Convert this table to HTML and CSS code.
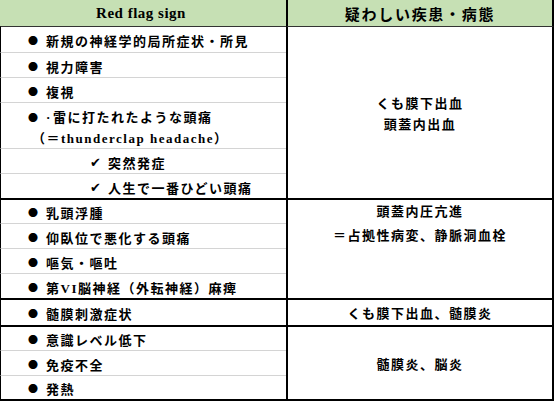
FILE: index.html
```html
<!DOCTYPE html>
<html lang="ja">
<head>
<meta charset="utf-8">
<title>Red flag sign</title>
<link rel="stylesheet" href="styles.css">
</head>
<body>
<div class="sheet">
  <div class="cell head hl">Red flag sign</div>
  <div class="cell head hr">疑わしい疾患・病態</div>

  <div class="cell l first"><span class="b">●</span>新規の神経学的局所症状・所見</div>
  <div class="cell r first span6"><div>くも膜下出血</div><div>頭蓋内出血</div></div>
  <div class="cell l"><span class="b">●</span>視力障害</div>
  <div class="cell l"><span class="b">●</span>複視</div>
  <div class="cell l two">
    <div><span class="b">●</span><span class="dot">·</span>雷に打たれたような頭痛</div>
    <div class="paren">（＝thunderclap headache）</div>
  </div>
  <div class="cell l chk"><span class="c">✔</span>突然発症</div>
  <div class="cell l chk"><span class="c">✔</span>人生で一番ひどい頭痛</div>

  <div class="cell l grp"><span class="b">●</span>乳頭浮腫</div>
  <div class="cell r grp span4 top"><div>頭蓋内圧亢進</div><div>＝占拠性病変、静脈洞血栓</div></div>
  <div class="cell l"><span class="b">●</span>仰臥位で悪化する頭痛</div>
  <div class="cell l"><span class="b">●</span>嘔気・嘔吐</div>
  <div class="cell l"><span class="b">●</span>第VI脳神経（外転神経）麻痺</div>

  <div class="cell l grp"><span class="b">●</span>髄膜刺激症状</div>
  <div class="cell r grp"><div>くも膜下出血、髄膜炎</div></div>

  <div class="cell l grp"><span class="b">●</span>意識レベル低下</div>
  <div class="cell r grp span3 last"><div>髄膜炎、脳炎</div></div>
  <div class="cell l"><span class="b">●</span>免疫不全</div>
  <div class="cell l last"><span class="b">●</span>発熱</div>
</div>
</body>
</html>
```
FILE: styles.css
```css
html, body {
  margin: 0;
  padding: 0;
  background: #ffffff;
}

.sheet {
  display: grid;
  grid-template-columns: 286px 268px;
  grid-template-rows: 26px 26px 25px 25px 46px 25px 25px 25px 25px 25px 25px 27px 25px 25px 26px;
  font-family: "Liberation Serif", "Noto Sans CJK JP", serif;
  font-weight: bold;
  font-size: 13px;
  letter-spacing: 1.5px;
  color: #000;
}

.cell {
  box-sizing: border-box;
  display: flex;
  flex-direction: column;
  justify-content: center;
  white-space: nowrap;
}

.head {
  background: #c6e0b4;
  align-items: center;
}

.hl {
  font-size: 15px;
  letter-spacing: 0.5px;
  padding-right: 4px;
}

.hr {
  font-size: 15px;
  letter-spacing: 1.7px;
  border-left: 2px solid #000;
  border-right: 2px solid #000;
}

.l {
  flex-direction: row;
  align-items: center;
  justify-content: flex-start;
  padding-left: 27px;
  padding-top: 2px;
  border-left: 1px solid #000;
  border-top: 1px solid #d4d4d4;
}

.l.two {
  flex-direction: column;
  align-items: flex-start;
  justify-content: center;
  line-height: 21px;
  padding-top: 4px;
}

.paren {
  padding-left: 4px;
}

.dot {
  display: inline-block;
  width: 7px;
  letter-spacing: 0;
}

.b {
  display: inline-block;
  width: 18px;
  font-size: 10px;
  letter-spacing: 0;
  font-family: "Noto Sans CJK JP", sans-serif;
}

.chk {
  padding-left: 89px;
}

.c {
  display: inline-block;
  width: 18px;
  letter-spacing: 0;
  font-family: "DejaVu Sans", sans-serif;
  font-weight: normal;
  font-size: 13px;
}

.r {
  align-items: center;
  border-left: 2px solid #000;
  border-right: 2px solid #000;
  line-height: 21px;
  padding-top: 2px;
}

.r.top {
  justify-content: flex-start;
  line-height: 24px;
  padding-top: 0;
}

.first {
  border-top: 1px solid #333;
}

.grp {
  border-top: 2px solid #000;
}

.last {
  border-bottom: 2px solid #000;
}

.span6 { grid-row: span 6; }
.span4 { grid-row: span 4; }
.span3 { grid-row: span 3; }
```
